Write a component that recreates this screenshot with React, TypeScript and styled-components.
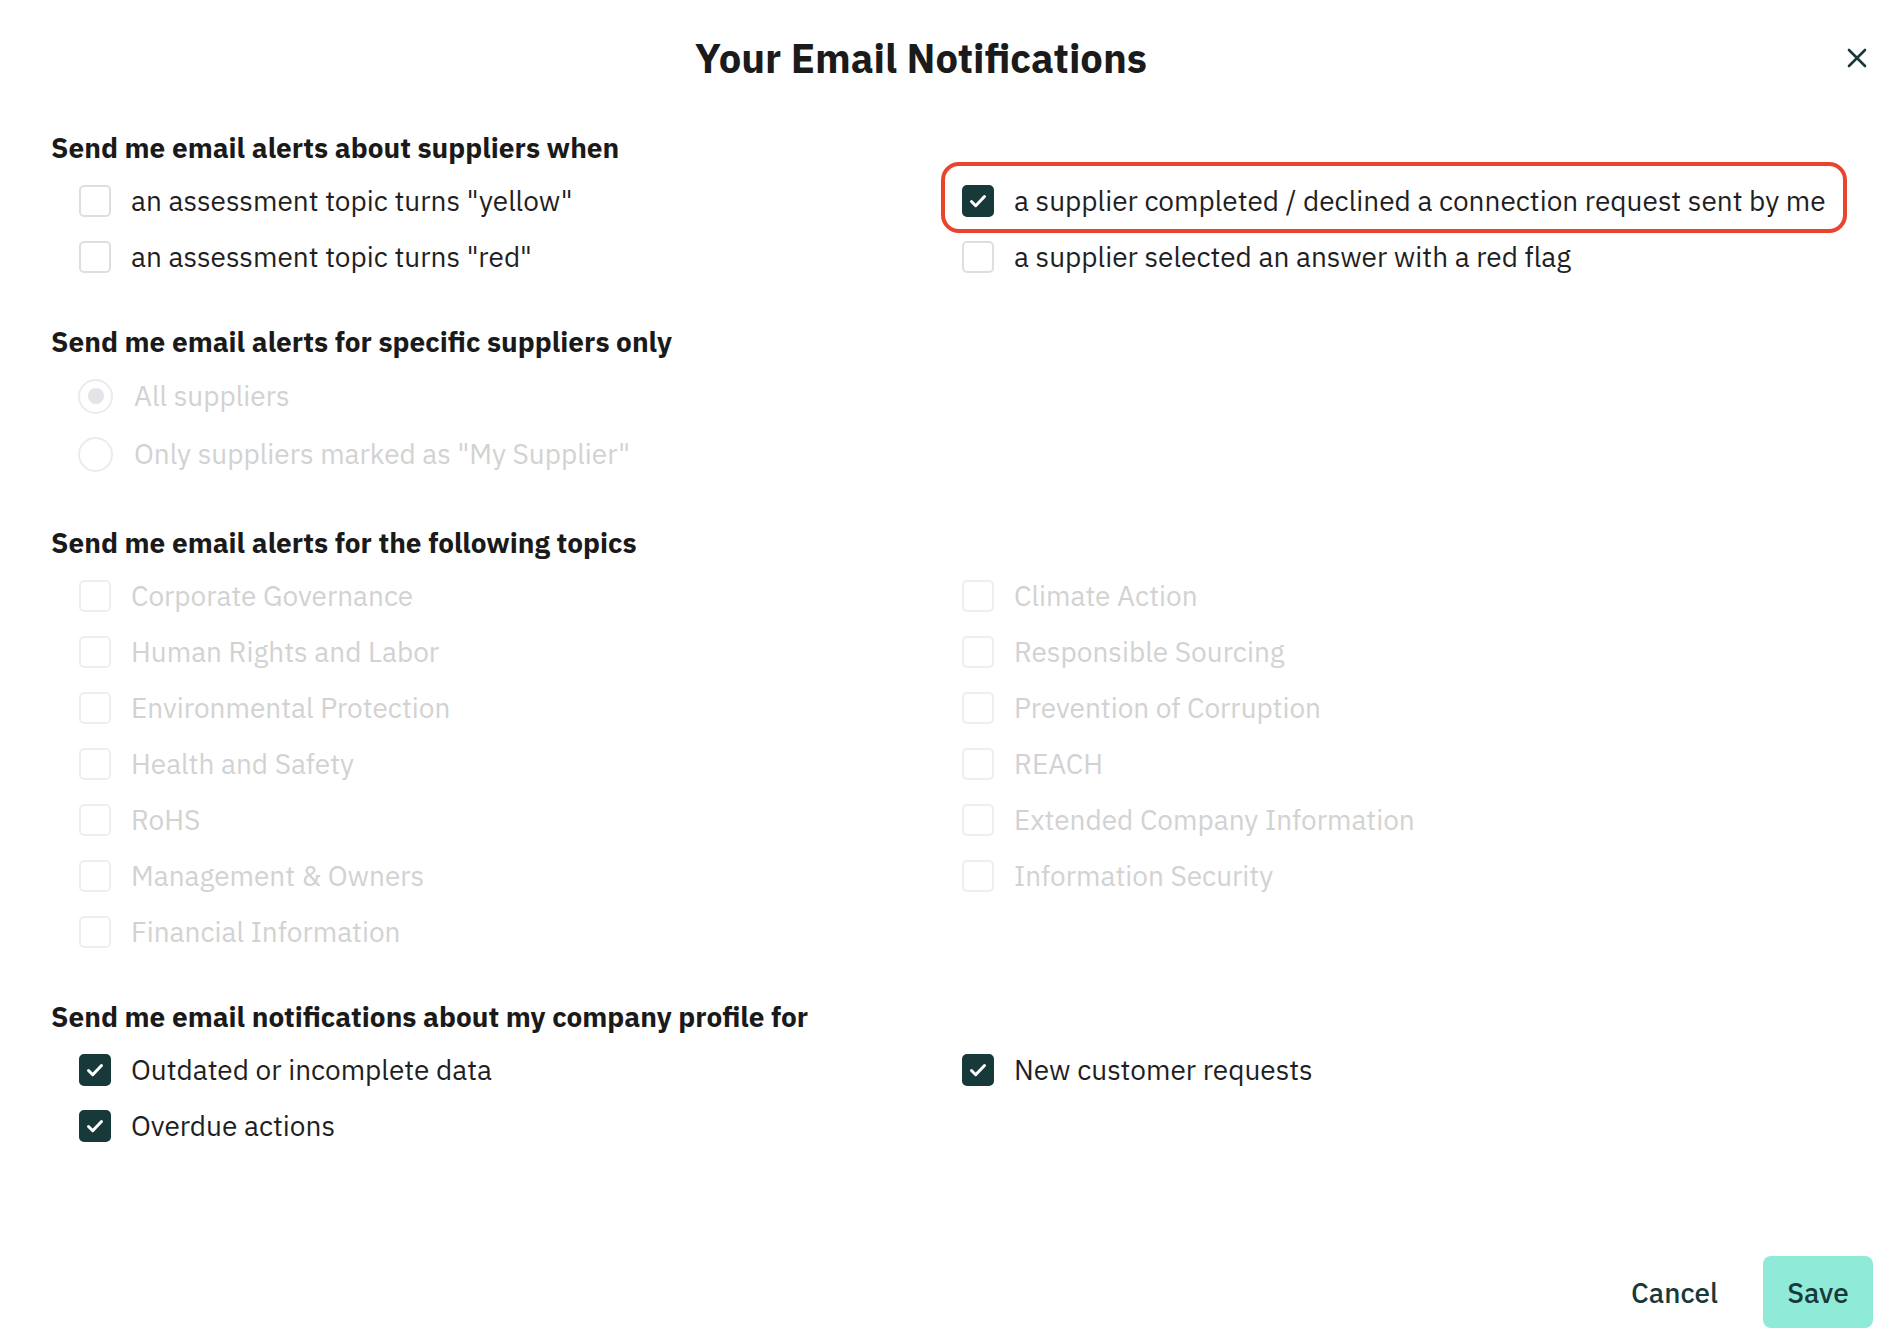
import styled, { createGlobalStyle, css } from "styled-components";

const GlobalStyle = createGlobalStyle`
  html, body {
    margin: 0;
    padding: 0;
    background: #ffffff;
  }
  body {
    font-family: "IBM Plex Sans", Roboto, "Liberation Sans", sans-serif;
    color: #1d1d1d;
  }
`;

const alertOptions = [
  { label: 'an assessment topic turns "yellow"', checked: false },
  {
    label: "a supplier completed / declined a connection request sent by me",
    checked: true,
    highlight: true,
  },
  { label: 'an assessment topic turns "red"', checked: false },
  { label: "a supplier selected an answer with a red flag", checked: false },
];

const topics = [
  "Corporate Governance",
  "Climate Action",
  "Human Rights and Labor",
  "Responsible Sourcing",
  "Environmental Protection",
  "Prevention of Corruption",
  "Health and Safety",
  "REACH",
  "RoHS",
  "Extended Company Information",
  "Management & Owners",
  "Information Security",
  "Financial Information",
];

const profileOptions = [
  "Outdated or incomplete data",
  "New customer requests",
  "Overdue actions",
];

const CheckIcon = () => (
  <svg width="24" height="24" viewBox="0 0 24 24" fill="none">
    <path
      d="M5.5 12.5l4.2 4.2L18.5 7.5"
      stroke="#ffffff"
      strokeWidth="3"
      strokeLinecap="round"
      strokeLinejoin="round"
    />
  </svg>
);

type OptionProps = {
  label: string;
  checked?: boolean;
  disabled?: boolean;
  highlight?: boolean;
};

const CheckOption = ({ label, checked, disabled, highlight }: OptionProps) => (
  <OptionRow highlight={highlight}>
    <Box checked={checked} disabled={disabled}>
      {checked && <CheckIcon />}
    </Box>
    <OptionLabel disabled={disabled}>{label}</OptionLabel>
  </OptionRow>
);

const App = () => {
  return (
    <>
      <GlobalStyle />
      <Page>
        <Header>
          <Title>Your Email Notifications</Title>
          <CloseButton aria-label="close">
            <svg width="22" height="22" viewBox="0 0 22 22" fill="none">
              <path
                d="M3 3l16 16M19 3L3 19"
                stroke="#17393a"
                strokeWidth="2.6"
                strokeLinecap="round"
              />
            </svg>
          </CloseButton>
        </Header>

        <Section>
          <SectionTitle>Send me email alerts about suppliers when</SectionTitle>
          <OptionGrid>
            {alertOptions.map((o) => (
              <CheckOption
                key={o.label}
                label={o.label}
                checked={o.checked}
                highlight={o.highlight}
              />
            ))}
          </OptionGrid>
        </Section>

        <Section>
          <SectionTitle>Send me email alerts for specific suppliers only</SectionTitle>
          <RadioList>
            <RadioRow>
              <Radio selected />
              <OptionLabel disabled>All suppliers</OptionLabel>
            </RadioRow>
            <RadioRow>
              <Radio />
              <OptionLabel disabled>Only suppliers marked as "My Supplier"</OptionLabel>
            </RadioRow>
          </RadioList>
        </Section>

        <Section>
          <SectionTitle>Send me email alerts for the following topics</SectionTitle>
          <OptionGrid>
            {topics.map((t) => (
              <CheckOption key={t} label={t} disabled />
            ))}
          </OptionGrid>
        </Section>

        <Section>
          <SectionTitle>Send me email notifications about my company profile for</SectionTitle>
          <OptionGrid>
            {profileOptions.map((p) => (
              <CheckOption key={p} label={p} checked />
            ))}
          </OptionGrid>
        </Section>

        <Footer>
          <CancelButton>Cancel</CancelButton>
          <SaveButton>Save</SaveButton>
        </Footer>
      </Page>
    </>
  );
};

export default App;

const Page = styled.div`
  min-height: 100vh;
  box-sizing: border-box;
  display: flex;
  flex-direction: column;
  padding: 36px 31px 12px 51px;
`;

const Header = styled.div`
  display: flex;
  align-items: center;
  height: 44px;
`;

const Title = styled.h1`
  flex: 1;
  margin: 0;
  text-align: center;
  font-size: 40px;
  line-height: 44px;
  font-weight: 700;
  color: #1b1b1b;
`;

const CloseButton = styled.button`
  width: 82px;
  height: 44px;
  padding: 0 5px 0 0;
  border: none;
  background: none;
  display: flex;
  align-items: center;
  justify-content: flex-end;
  cursor: pointer;
`;

const Section = styled.section`
  margin-top: 41px;

  &:first-of-type {
    margin-top: 52px;
  }
`;

const SectionTitle = styled.h2`
  margin: 0 0 9px;
  font-size: 28px;
  line-height: 32px;
  font-weight: 700;
  color: #1a1a1a;
`;

const OptionGrid = styled.div`
  display: grid;
  grid-template-columns: 883px 1fr;
  padding-left: 28px;
`;

const OptionRow = styled.div<{ highlight?: boolean }>`
  position: relative;
  height: 56px;
  display: flex;
  align-items: center;
  gap: 20px;

  ${(p) =>
    p.highlight &&
    css`
      &::before {
        content: "";
        position: absolute;
        left: -21px;
        right: 26px;
        top: -11px;
        bottom: -4px;
        border: 4px solid #e8452c;
        border-radius: 18px;
        pointer-events: none;
      }
    `}
`;

const Box = styled.span<{ checked?: boolean; disabled?: boolean }>`
  flex: none;
  width: 32px;
  height: 32px;
  box-sizing: border-box;
  border-radius: 5px;
  display: flex;
  align-items: center;
  justify-content: center;
  border: 2px solid
    ${(p) => (p.checked ? "#17393a" : p.disabled ? "#eeeeee" : "#dedede")};
  background: ${(p) => (p.checked ? "#17393a" : "#ffffff")};
`;

const OptionLabel = styled.span<{ disabled?: boolean }>`
  font-size: 28px;
  line-height: 32px;
  white-space: nowrap;
  color: ${(p) => (p.disabled ? "#d2d2d2" : "#1f1f1f")};
`;

const RadioList = styled.div`
  display: flex;
  flex-direction: column;
  padding: 0 0 3px 27px;
`;

const RadioRow = styled.div`
  height: 58px;
  display: flex;
  align-items: center;
  gap: 21px;
`;

const Radio = styled.span<{ selected?: boolean }>`
  flex: none;
  width: 35px;
  height: 35px;
  box-sizing: border-box;
  border-radius: 50%;
  border: 2px solid #ebebeb;
  display: flex;
  align-items: center;
  justify-content: center;

  &::after {
    content: "";
    width: 16px;
    height: 16px;
    border-radius: 50%;
    background: ${(p) => (p.selected ? "#e3e4e8" : "transparent")};
  }
`;

const Footer = styled.div`
  margin-top: auto;
  display: flex;
  justify-content: flex-end;
  align-items: center;
  gap: 23px;
`;

const buttonBase = css`
  height: 72px;
  border: none;
  border-radius: 8px;
  font-family: inherit;
  font-size: 28px;
  font-weight: 500;
  color: #17393a;
  cursor: pointer;
`;

const CancelButton = styled.button`
  ${buttonBase};
  padding: 0 22px;
  background: transparent;
`;

const SaveButton = styled.button`
  ${buttonBase};
  width: 110px;
  padding: 0;
  background: #90ead8;
`;
